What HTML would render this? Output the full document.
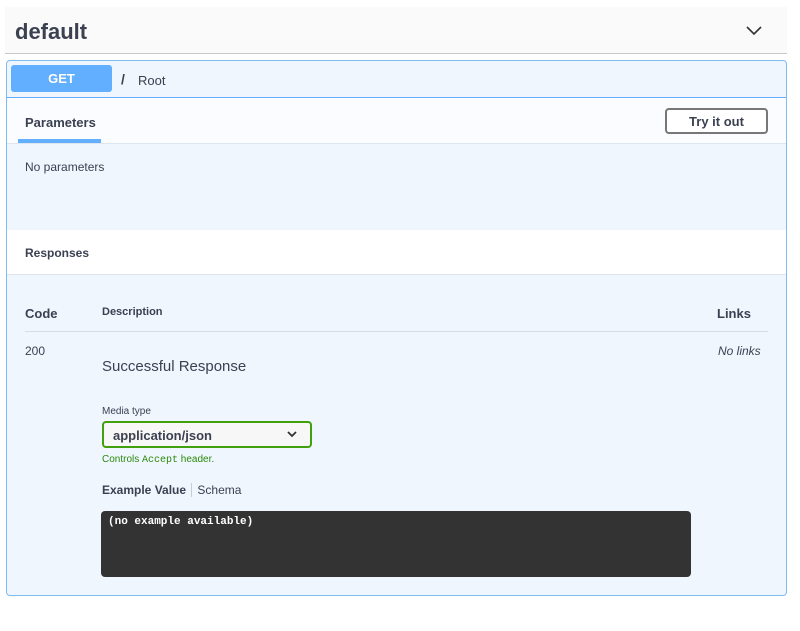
<!DOCTYPE html>
<html><head><style>
*{margin:0;padding:0;box-sizing:border-box}
body{width:800px;height:631px;background:#fff;font-family:"Liberation Sans",sans-serif;color:#3b4151;position:relative;overflow:hidden}
.a{position:absolute}
</style></head><body>
<div class="a" style="left:5px;top:7px;width:782px;height:47px;background:#fafafa;border-bottom:1px solid #c8c8c8"></div>
<div class="a" style="left:15px;top:19px;font-size:22px;font-weight:bold;color:#3b4151">default</div>
<svg class="a" style="left:745px;top:25px" width="18" height="12" viewBox="0 0 18 12"><path d="M2 2 L9 9 L16 2" fill="none" stroke="#333" stroke-width="1.6"/></svg>

<div class="a" style="left:6px;top:60px;width:781px;height:536px;background:#eff6fe;border:1px solid #7fbcf4;border-radius:4px"></div>
<div class="a" style="left:7px;top:97px;width:779px;height:1px;background:#61affe"></div>
<div class="a" style="left:11px;top:65px;width:101px;height:27px;background:#61affe;border-radius:3px;color:#fff;font-weight:bold;font-size:13px;text-align:center;line-height:27px">GET</div>
<div class="a" style="left:121px;top:71px;font-size:14px;font-weight:bold">/</div>
<div class="a" style="left:138px;top:73px;font-size:13px">Root</div>

<div class="a" style="left:7px;top:98px;width:779px;height:46px;background:#fafcff;border-bottom:1px solid #dde5ee"></div>
<div class="a" style="left:25px;top:115px;font-size:13px;font-weight:bold">Parameters</div>
<div class="a" style="left:18px;top:139px;width:83px;height:4px;background:#61affe"></div>
<div class="a" style="left:665px;top:108px;width:103px;height:26px;border:2px solid #777;border-radius:4px;text-align:center;line-height:23px;font-size:13px;font-weight:bold;background:#fff">Try it out</div>
<div class="a" style="left:25px;top:160px;font-size:12px">No parameters</div>

<div class="a" style="left:7px;top:230px;width:779px;height:45px;background:#fff;border-bottom:1px solid #dde5ee"></div>
<div class="a" style="left:25px;top:246px;font-size:12px;font-weight:bold">Responses</div>

<div class="a" style="left:25px;top:306px;font-size:13px;font-weight:bold">Code</div>
<div class="a" style="left:102px;top:306px;font-size:11px;font-weight:bold">Description</div>
<div class="a" style="left:717px;top:306px;font-size:13px;font-weight:bold">Links</div>
<div class="a" style="left:25px;top:331px;width:743px;height:1px;background:#d6dde6"></div>
<div class="a" style="left:25px;top:344px;font-size:12px">200</div>
<div class="a" style="left:718px;top:344px;font-size:12px;font-style:italic">No links</div>
<div class="a" style="left:102px;top:358px;font-size:15px">Successful Response</div>
<div class="a" style="left:102px;top:406px;font-size:10px">Media type</div>
<div class="a" style="left:102px;top:421px;width:210px;height:27px;border:2px solid #41a10d;border-radius:4px;background:#f7f7f7"></div>
<div class="a" style="left:113px;top:428px;font-size:13px;font-weight:bold">application/json</div>
<svg class="a" style="left:286px;top:430px" width="12" height="9" viewBox="0 0 12 9"><path d="M2 2 L6 6 L10 2" fill="none" stroke="#333" stroke-width="1.8"/></svg>
<div class="a" style="left:102px;top:454px;font-size:10px;color:#2a8a0a">Controls <span style="font-family:'Liberation Mono',monospace">Accept</span> header.</div>
<div class="a" style="left:102px;top:483px;font-size:12px"><b>Example Value</b> <span style="border-left:1px solid #ccc;padding-left:5px;margin-left:2px">Schema</span></div>
<div class="a" style="left:101px;top:511px;width:590px;height:66px;background:#333;border-radius:4px"></div>
<div class="a" style="left:108px;top:516px;font-size:11px;font-weight:bold;color:#fff;font-family:'Liberation Mono',monospace">(no example available)</div>
</body></html>
